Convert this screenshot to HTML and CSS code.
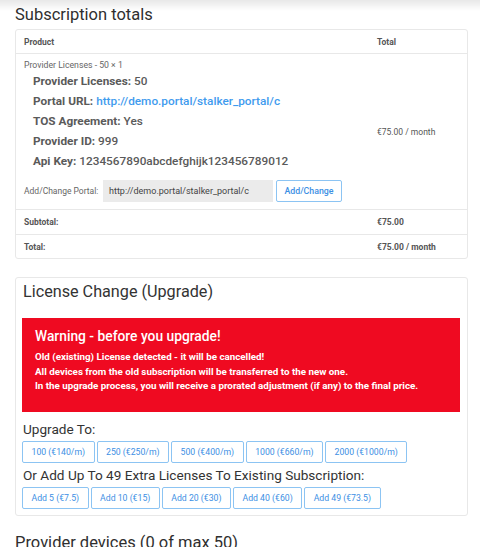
FILE: index.html
```html
<!DOCTYPE html>
<html>
<head>
<meta charset="utf-8">
<link rel="stylesheet" href="styles.css">
</head>
<body>
<div class="topshadow"></div>
<div class="page">
  <h2 class="section-title">Subscription totals</h2>
  <div class="card">
    <table class="totals">
      <thead>
        <tr class="head-row"><th class="col-product">Product</th><th class="col-total">Total</th></tr>
      </thead>
      <tbody>
        <tr class="item-row">
          <td class="col-product">
            <div class="item-name">Provider Licenses - 50 × 1</div>
            <ul class="meta">
              <li>Provider Licenses: <span class="val">50</span></li>
              <li>Portal URL: <a class="link" href="#">http://demo.portal/stalker_portal/c</a></li>
              <li>TOS Agreement: <span class="val">Yes</span></li>
              <li>Provider ID: <span class="val">999</span></li>
              <li>Api Key: <span class="val">1234567890abcdefghijk123456789012</span></li>
            </ul>
            <div class="portal-row">
              <span class="portal-label">Add/Change Portal:</span>
              <span class="portal-input">http://demo.portal/stalker_portal/c</span>
              <span class="btn btn-change">Add/Change</span>
            </div>
          </td>
          <td class="col-total">€75.00 / month</td>
        </tr>
        <tr class="sum-row"><th class="col-product">Subtotal:</th><td class="col-total strong">€75.00</td></tr>
        <tr class="sum-row last"><th class="col-product">Total:</th><td class="col-total strong">€75.00 / month</td></tr>
      </tbody>
    </table>
  </div>

  <div class="card card-upgrade">
    <h3 class="card-title">License Change (Upgrade)</h3>
    <div class="warning">
      <div class="warning-title">Warning - before you upgrade!</div>
      <div class="warning-line">Old (existing) License detected - it will be cancelled!</div>
      <div class="warning-line">All devices from the old subscription will be transferred to the new one.</div>
      <div class="warning-line">In the upgrade process, you will receive a prorated adjustment (if any) to the final price.</div>
    </div>
    <h4 class="sub-title">Upgrade To:</h4>
    <div class="btn-row">
      <span class="btn">100 (€140/m)</span>
      <span class="btn">250 (€250/m)</span>
      <span class="btn">500 (€400/m)</span>
      <span class="btn">1000 (€660/m)</span>
      <span class="btn">2000 (€1000/m)</span>
    </div>
    <h4 class="sub-title second">Or Add Up To 49 Extra Licenses To Existing Subscription:</h4>
    <div class="btn-row">
      <span class="btn">Add 5 (€7.5)</span>
      <span class="btn">Add 10 (€15)</span>
      <span class="btn">Add 20 (€30)</span>
      <span class="btn">Add 40 (€60)</span>
      <span class="btn">Add 49 (€73.5)</span>
    </div>
  </div>

  <h2 class="section-title devices">Provider devices (0 of max 50)</h2>
</div>
</body>
</html>
```

FILE: styles.css
```css
html, body {
  margin: 0;
  padding: 0;
  background: #ffffff;
}
body {
  font-family: Roboto, "Liberation Sans", sans-serif;
  color: #333333;
}
.topshadow {
  position: fixed;
  top: 0;
  left: 0;
  right: 0;
  height: 11px;
  background: linear-gradient(rgba(0,0,0,0.09), rgba(0,0,0,0));
  pointer-events: none;
}
.page {
  padding: 0 12px 0 15px;
}
.section-title {
  margin: 0 0 4px 0;
  padding-top: 4px;
  font-size: 16.5px;
  line-height: 21px;
  font-weight: 400;
  color: #2f2f2f;
}
.section-title.devices {
  margin-top: 17px;
  padding-top: 0;
  line-height: 20px;
}
.card {
  border: 1px solid #e8e8e8;
  border-radius: 3px;
  background: #fff;
}
.totals {
  width: 100%;
  border-collapse: collapse;
  font-size: 8.5px;
  color: #555555;
}
.totals th, .totals td {
  padding: 0 8px;
  text-align: left;
  vertical-align: middle;
}
.col-total {
  width: 82px;
}
.head-row th {
  height: 23px;
  font-weight: 700;
  color: #555;
  border-bottom: 1px solid #e8e8e8;
}
.item-row td {
  padding-top: 5px;
  padding-bottom: 7px;
  border-bottom: 1px solid #e8e8e8;
}
.item-row td.col-total {
  padding-top: 0;
  padding-bottom: 0;
  color: #555;
}
.item-name {
  font-size: 8.7px;
  line-height: 12px;
  color: #666;
}
.meta {
  list-style: none;
  margin: 0;
  padding: 0 0 0 9px;
}
.meta li {
  font-size: 11.8px;
  line-height: 20px;
  font-weight: 700;
  color: #5a5a5a;
}
.meta .val {
  font-weight: 500;
  color: #5a5a5a;
}
.meta .link {
  color: #3f9bee;
  text-decoration: none;
  font-weight: 500;
}
.portal-row {
  display: flex;
  align-items: center;
  margin-top: 9px;
}
.portal-label {
  color: #666;
  font-size: 8.5px;
  margin-right: 3px;
  width: 76px;
}
.portal-input {
  width: 164px;
  height: 22px;
  line-height: 22px;
  padding-left: 6px;
  background: #ebebeb;
  color: #444;
  font-size: 9px;
  margin-right: 3px;
}
.btn {
  display: inline-block;
  height: 20px;
  line-height: 20px;
  padding: 0 8.5px;
  border: 1px solid #8cc4f3;
  border-radius: 2px;
  color: #3d8fe4;
  font-size: 8.7px;
  background: #fff;
  white-space: nowrap;
}
.btn-change {
  width: 64px;
  padding: 0;
  text-align: center;
  font-weight: 500;
  font-size: 8.8px;
}
.sum-row th {
  height: 24px;
  font-weight: 700;
  color: #555;
  border-bottom: 1px solid #e8e8e8;
}
.sum-row .strong {
  font-weight: 700;
  color: #555;
  border-bottom: 1px solid #e8e8e8;
}
.sum-row.last th, .sum-row.last td {
  border-bottom: none;
  height: 23px;
}
.card-upgrade {
  margin-top: 18px;
  padding: 0 7px 6px 6px;
}
.card-title {
  margin: 0;
  padding: 4px 0 0 1px;
  font-size: 16.2px;
  line-height: 19px;
  font-weight: 400;
  color: #333;
}
.warning {
  margin-top: 17px;
  background: #ef0a21;
  color: #ffffff;
  padding: 9px 13px 18px 13px;
}
.warning-title {
  font-size: 13.8px;
  line-height: 18px;
  font-weight: 500;
  margin-bottom: 5px;
}
.warning-line {
  font-size: 9.8px;
  line-height: 14.5px;
  font-weight: 700;
}
.sub-title {
  margin: 9px 0 0 0;
  padding-left: 1px;
  font-size: 13.6px;
  line-height: 16px;
  font-weight: 400;
  color: #333;
}
.sub-title.second {
  margin-top: 4px;
}
.btn-row {
  display: flex;
  gap: 2px;
  margin-top: 4px;
}
```
